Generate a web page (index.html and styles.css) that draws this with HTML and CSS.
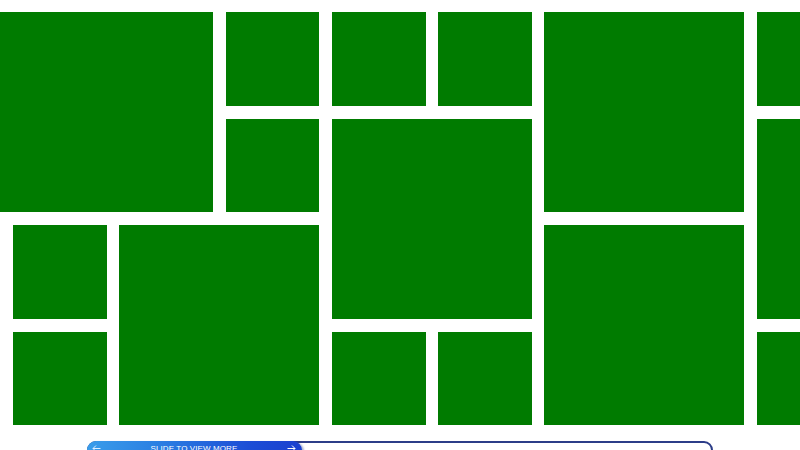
FILE: index.html
```html
<!DOCTYPE html>
<html>
<head>
<meta charset="utf-8">
<link rel="stylesheet" href="styles.css">
</head>
<body>
<div class="viewport">
  <div class="grid">
    <div class="tile a"></div>
    <div class="tile b"></div>
    <div class="tile c"></div>
    <div class="tile d"></div>
    <div class="tile e"></div>
    <div class="tile f"></div>
    <div class="tile g"></div>
    <div class="tile h"></div>
    <div class="tile i"></div>
    <div class="tile j"></div>
    <div class="tile k"></div>
    <div class="tile l"></div>
    <div class="tile m"></div>
    <div class="tile n"></div>
    <div class="tile o"></div>
    <div class="tile p"></div>
  </div>
</div>
<div class="scroller">
  <div class="track">
    <div class="thumb">
      <svg class="arrow" width="9" height="7" viewBox="0 0 9 7"><path d="M8.5 3.5H1M4 0.5L1 3.5l3 3" fill="none" stroke="#dfeeff" stroke-width="1"/></svg>
      <span class="label">SLIDE TO VIEW MORE</span>
      <svg class="arrow" width="9" height="7" viewBox="0 0 9 7"><path d="M0.5 3.5H8M5 0.5L8 3.5l-3 3" fill="none" stroke="#ffffff" stroke-width="1"/></svg>
    </div>
  </div>
</div>
</body>
</html>
```
FILE: styles.css
```css
html, body {
  margin: 0;
  padding: 0;
  background: #ffffff;
  overflow: hidden;
  width: 800px;
  height: 450px;
  font-family: "Liberation Sans", Arial, sans-serif;
}
.viewport {
  width: 800px;
  overflow: hidden;
  padding-top: 12px;
}
.grid {
  display: grid;
  margin-left: -93.25px;
  grid-template-columns: repeat(10, 93.75px);
  grid-template-rows: repeat(4, 93.5px);
  column-gap: 12.5px;
  row-gap: 13px;
  width: max-content;
}
.tile { background: #007b00; }
.a { grid-column: 1 / span 3; grid-row: 1 / span 2; }
.b { grid-column: 4; grid-row: 1; }
.c { grid-column: 4; grid-row: 2; }
.d { grid-column: 5; grid-row: 1; }
.e { grid-column: 6; grid-row: 1; }
.f { grid-column: 5 / span 2; grid-row: 2 / span 2; }
.g { grid-column: 7 / span 2; grid-row: 1 / span 2; }
.h { grid-column: 9; grid-row: 1; }
.i { grid-column: 9 / span 2; grid-row: 2 / span 2; }
.j { grid-column: 2; grid-row: 3; }
.k { grid-column: 2; grid-row: 4; }
.l { grid-column: 3 / span 2; grid-row: 3 / span 2; }
.m { grid-column: 5; grid-row: 4; }
.n { grid-column: 6; grid-row: 4; }
.o { grid-column: 7 / span 2; grid-row: 3 / span 2; }
.p { grid-column: 9; grid-row: 4; }

.scroller {
  padding-top: 16px;
  padding-left: 87px;
}
.track {
  position: relative;
  width: 622px;
  height: 18px;
  border: 2px solid #2c3d88;
  border-radius: 9px;
}
.thumb {
  position: absolute;
  top: -2px;
  left: -2px;
  width: 215px;
  height: 22px;
  border-radius: 9px;
  background: linear-gradient(90deg, #3a9dea 0%, #2a7de2 35%, #1c4ed6 75%, #1a40cf 100%);
  box-shadow: 2px 1px 2px rgba(20, 40, 120, 0.35);
  display: flex;
  align-items: flex-start;
  justify-content: space-between;
  padding: 0 6px 0 5px;
  box-sizing: border-box;
}
.arrow {
  margin-top: 4px;
  flex: none;
}
.label {
  color: #ffffff;
  font-size: 8px;
  line-height: 10px;
  margin-top: 3px;
  letter-spacing: 0.1px;
}
```
